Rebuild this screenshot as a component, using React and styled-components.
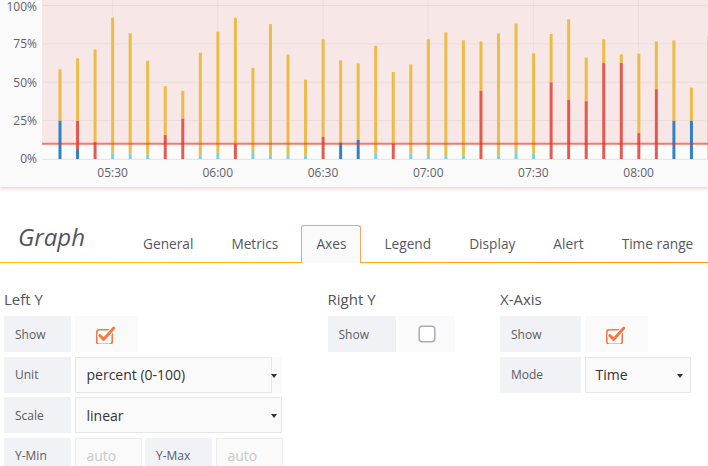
import React from 'react';
import styled, { createGlobalStyle, css } from 'styled-components';

const GlobalStyle = createGlobalStyle`
  * { box-sizing: border-box; }
  body {
    margin: 0;
    background: #fff;
    font-family: "Open Sans", "Liberation Sans", sans-serif;
    color: #52545c;
  }
`;

// chart geometry
const PLOT_LEFT = 42;
const ZERO_Y = 159;
const PX_PER_PCT = 1.535;
const THRESHOLD = 10;
const yOf = (v) => ZERO_Y - v * PX_PER_PCT;
const barX = (i) => 60 + i * 17.54;

const COLORS = { b: '#1f78c1', r: '#e24d42', c: '#6ed0e0', y: '#eab839' };

// stacked tops per bar: blue, red, cyan, then yellow up to t
const bars = [
  { b: 25, t: 58.4 }, { b: 6.5, r: 25, t: 65.6 }, { r: 11, t: 71.4 }, { c: 3.5, t: 92 },
  { c: 3.5, t: 82 }, { c: 3, t: 64 }, { r: 15.6, t: 47.4 }, { r: 26.4, t: 44.4 },
  { c: 2.5, t: 69.3 }, { c: 4, t: 83 }, { r: 9.7, t: 92 }, { c: 4.5, t: 59.3 },
  { c: 2, t: 87.9 }, { c: 2, t: 68 }, { c: 2.5, t: 51.7 }, { r: 14.5, t: 78 },
  { b: 10.8, t: 64.3 }, { b: 12.5, t: 62.3 }, { c: 4, t: 73.8 }, { r: 10, t: 56.7 },
  { c: 3.5, t: 61.7 }, { c: 2.5, t: 78 }, { c: 2.5, t: 82.5 }, { c: 2, t: 77.3 },
  { r: 44.6, t: 76.6 }, { c: 2.5, t: 81.8 }, { c: 4.5, t: 88.3 }, { c: 3.5, t: 68.8 },
  { r: 50, t: 81.4 }, { r: 38.7, t: 91 }, { r: 37.7, t: 66 }, { r: 62.5, t: 78 },
  { r: 62.5, t: 68.2 }, { r: 16.9, t: 68.6 }, { r: 45.5, t: 76.6 }, { b: 25, t: 77.3 },
  { b: 25, t: 46.5 }, { t: 80 },
];

const yTicks = [0, 25, 50, 75, 100];
const xTicks = ['05:30', '06:00', '06:30', '07:00', '07:30', '08:00'];
const tickX = (k) => 112.6 + k * 105.2;

const StackedBar = ({ d, i }) => {
  let prev = 0;
  const segs = [];
  ['b', 'r', 'c'].forEach((k) => {
    if (d[k]) {
      segs.push([k, prev, d[k]]);
      prev = d[k];
    }
  });
  segs.push(['y', prev, d.t]);
  return segs.map(([k, lo, hi]) => (
    <rect
      key={`${i}-${k}`}
      x={barX(i) - 1.5}
      y={yOf(hi)}
      width={3}
      height={yOf(lo) - yOf(hi)}
      fill={COLORS[k]}
      fillOpacity={0.92}
    />
  ));
};

const Chart = () => (
  <svg width="708" height="187" viewBox="0 0 708 187">
    <rect x={PLOT_LEFT} y={0} width={708 - PLOT_LEFT} height={yOf(THRESHOLD)} fill="rgba(234,112,112,0.13)" />
    <rect x={PLOT_LEFT} y={yOf(THRESHOLD)} width={708 - PLOT_LEFT} height={ZERO_Y - yOf(THRESHOLD)} fill="#fcfcfc" />
    {yTicks.map((v) => (
      <line key={v} x1={PLOT_LEFT} x2={708} y1={yOf(v)} y2={yOf(v)} stroke="rgba(0,0,0,0.05)" strokeWidth="1" />
    ))}
    {xTicks.map((t, k) => (
      <line key={t} x1={tickX(k)} x2={tickX(k)} y1={0} y2={ZERO_Y} stroke="rgba(0,0,0,0.04)" strokeWidth="1" />
    ))}
    <line x1={PLOT_LEFT} x2={708} y1={ZERO_Y + 0.5} y2={ZERO_Y + 0.5} stroke="#e6e6e6" />
    {bars.map((d, i) => (
      <StackedBar key={i} d={d} i={i} />
    ))}
    <line x1={PLOT_LEFT} x2={708} y1={yOf(THRESHOLD)} y2={yOf(THRESHOLD)} stroke="rgba(237,46,24,0.62)" strokeWidth="2" />
    <g fontFamily="'Open Sans', 'Liberation Sans', sans-serif" fontSize="12" fill="#5f6168">
      {yTicks.map((v) => (
        <text key={v} x={37} y={Math.max(yOf(v), 6.5)} dy="0.36em" textAnchor="end">{v}%</text>
      ))}
      {xTicks.map((t, k) => (
        <text key={t} x={tickX(k)} y={172.5} dy="0.36em" textAnchor="middle">{t}</text>
      ))}
    </g>
  </svg>
);

const CheckedBox = () => (
  <svg width="22" height="20" viewBox="0 0 22 20">
    <rect x="1.8" y="5.8" width="15.4" height="14.4" rx="2.5" fill="#fff" stroke="#f7773f" strokeWidth="1.6" />
    <path d="M4.8 11.5 L8.6 15.4 L18.8 4" fill="none" stroke="#fff" strokeWidth="5" strokeLinecap="round" strokeLinejoin="round" />
    <path d="M4.8 11.5 L8.6 15.4 L18.8 4" fill="none" stroke="#f7773f" strokeWidth="3" strokeLinecap="round" strokeLinejoin="round" />
  </svg>
);

const EmptyBox = () => (
  <svg width="18" height="18" viewBox="0 0 18 18">
    <rect x="1.2" y="1.2" width="15.6" height="15.6" rx="3" fill="#fff" stroke="#a9adb6" strokeWidth="1.5" />
  </svg>
);

const tabs = ['General', 'Metrics', 'Axes', 'Legend', 'Display', 'Alert', 'Time range'];

export default function App() {
  return (
    <Page>
      <GlobalStyle />
      <ChartPanel>
        <Chart />
      </ChartPanel>

      <EditorHeader>
        <EditorTitle>Graph</EditorTitle>
        {tabs.map((t) => (
          <Tab key={t} $active={t === 'Axes'}>{t}</Tab>
        ))}
      </EditorHeader>

      <Form>
        <Section>
          <SectionTitle>Left Y</SectionTitle>
          <Row>
            <Label $w={67}>Show</Label>
            <CheckCell $w={63}><CheckedBox /></CheckCell>
          </Row>
          <Row>
            <Label $w={67}>Unit</Label>
            <SelectWrap $w={207}>
              <SelectBox $w={197}>percent (0-100)</SelectBox>
              <Caret $right={5} />
            </SelectWrap>
          </Row>
          <Row>
            <Label $w={67}>Scale</Label>
            <SelectWrap $w={207}>
              <SelectBox>linear</SelectBox>
              <Caret $right={5} />
            </SelectWrap>
          </Row>
          <Row>
            <Label $w={67}>Y-Min</Label>
            <Input $w={67}>auto</Input>
            <Label $w={67}>Y-Max</Label>
            <Input $w={67}>auto</Input>
          </Row>
        </Section>

        <Section>
          <SectionTitle>Right Y</SectionTitle>
          <Row>
            <Label $w={68}>Show</Label>
            <CheckCell $w={56}><EmptyBox /></CheckCell>
          </Row>
        </Section>

        <Section>
          <SectionTitle>X-Axis</SectionTitle>
          <Row>
            <Label $w={81}>Show</Label>
            <CheckCell $w={63}><CheckedBox /></CheckCell>
          </Row>
          <Row>
            <Label $w={81}>Mode</Label>
            <SelectWrap $w={106}>
              <SelectBox $pad={10}>Time</SelectBox>
              <Caret $right={8} />
            </SelectWrap>
          </Row>
        </Section>
      </Form>
    </Page>
  );
}

const Page = styled.div`
  width: 708px;
  height: 466px;
  overflow: hidden;
`;

const ChartPanel = styled.div`
  height: 187px;
  background: #fafafa;
  box-shadow: 0 2px 3px rgba(240, 110, 110, 0.32);
  svg { display: block; }
`;

const EditorHeader = styled.div`
  display: flex;
  align-items: flex-end;
  margin-top: 38px;
  height: 38px;
  background: linear-gradient(to right, #ffc800, #ff9400) left bottom / 100% 1px no-repeat;
`;

const EditorTitle = styled.div`
  flex: 0 0 128px;
  padding-left: 18px;
  margin-bottom: 14px;
  font-size: 24px;
  line-height: 24px;
  font-style: italic;
  color: #52545c;
`;

const Tab = styled.div`
  flex-shrink: 0;
  height: 38px;
  padding: 0 14px;
  margin-right: 8px;
  line-height: 36px;
  font-size: 13.7px;
  color: #55575f;
  border: 1px solid transparent;
  border-bottom: none;
  border-radius: 3px 3px 0 0;
  white-space: nowrap;
  ${(p) => p.$active && css`
    background: #fafafa;
    border-color: #f0a560;
  `}
`;

const Form = styled.div`
  display: flex;
  gap: 45px;
  padding: 26px 0 0 4px;
`;

const Section = styled.div`
  display: flex;
  flex-direction: column;
  gap: 4.5px;
`;

const SectionTitle = styled.div`
  font-size: 15px;
  line-height: 20px;
  margin-bottom: 2.5px;
  color: #52545c;
`;

const Row = styled.div`
  display: flex;
  gap: 3.5px;
  height: 36px;
`;

const Label = styled.div`
  width: ${(p) => p.$w}px;
  display: flex;
  align-items: center;
  padding-left: 11px;
  background: #f1f2f6;
  font-size: 12px;
  color: #5a5c63;
`;

const CheckCell = styled.div`
  width: ${(p) => p.$w}px;
  display: flex;
  align-items: center;
  justify-content: center;
  background: #fafafa;
  svg { display: block; }
`;

const SelectWrap = styled.div`
  position: relative;
  width: ${(p) => p.$w}px;
  background: #fafafa;
`;

const SelectBox = styled.div`
  width: ${(p) => (p.$w ? `${p.$w}px` : '100%')};
  height: 100%;
  display: flex;
  align-items: center;
  padding-left: ${(p) => p.$pad || 11}px;
  border: 1px solid #e6e6e6;
  background: #fafafa;
  font-size: 14px;
  color: #333;
`;

const Caret = styled.span`
  position: absolute;
  top: 50%;
  right: ${(p) => p.$right}px;
  margin-top: -1px;
  border-left: 3.5px solid transparent;
  border-right: 3.5px solid transparent;
  border-top: 4px solid #333;
`;

const Input = styled.div`
  width: ${(p) => p.$w}px;
  display: flex;
  align-items: center;
  padding-left: 11px;
  border: 1px solid #ececec;
  background: #fafafa;
  font-size: 14px;
  color: #c9c9c9;
`;
